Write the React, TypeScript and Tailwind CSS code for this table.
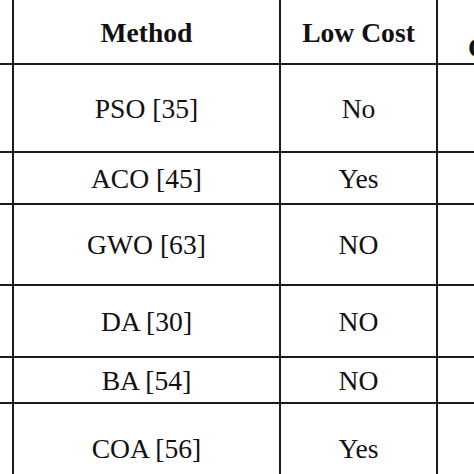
import React from "react";

type Row = { method: string; cost: string; h: string };

const rows: Row[] = [
  { method: "PSO [35]", cost: "No", h: "h-[88px]" },
  { method: "ACO [45]", cost: "Yes", h: "h-[52px]" },
  { method: "GWO [63]", cost: "NO", h: "h-[81px]" },
  { method: "DA [30]", cost: "NO", h: "h-[72px]" },
  { method: "BA [54]", cost: "NO", h: "h-[46px]" },
  { method: "COA [56]", cost: "Yes", h: "h-[88px]" },
];

export default function App() {
  return (
    <div className="w-[474px] h-[474px] overflow-hidden bg-white text-[#111] font-['Liberation_Serif','Times_New_Roman',serif] text-[27.6px] leading-none">
      <div className="flex h-[65px] border-b-2 border-[#1c1c1c]">
        <div className="w-[12px] shrink-0" />
        <div className="w-[267px] shrink-0 border-l-2 border-[#1c1c1c] flex items-center justify-center font-bold pt-[2px]">
          Method
        </div>
        <div className="w-[157px] shrink-0 border-l-2 border-[#1c1c1c] flex items-center justify-center font-bold pt-[2px]">
          Low Cost
        </div>
        <div className="flex-1 border-l-2 border-[#1c1c1c] pl-[30px] pt-[34px] font-bold whitespace-nowrap overflow-hidden">
          Complexity
        </div>
      </div>
      {rows.map((r, i) => (
        <div
          key={r.method}
          className={`flex ${r.h} ${i < rows.length - 1 ? "border-b-2 border-[#1c1c1c]" : ""}`}
        >
          <div className="w-[12px] shrink-0" />
          <div className="w-[267px] shrink-0 border-l-2 border-[#1c1c1c] flex items-center justify-center pt-[1px]">
            {r.method}
          </div>
          <div className="w-[157px] shrink-0 border-l-2 border-[#1c1c1c] flex items-center justify-center pt-[1px]">
            {r.cost}
          </div>
          <div className="flex-1 border-l-2 border-[#1c1c1c]" />
        </div>
      ))}
    </div>
  );
}
